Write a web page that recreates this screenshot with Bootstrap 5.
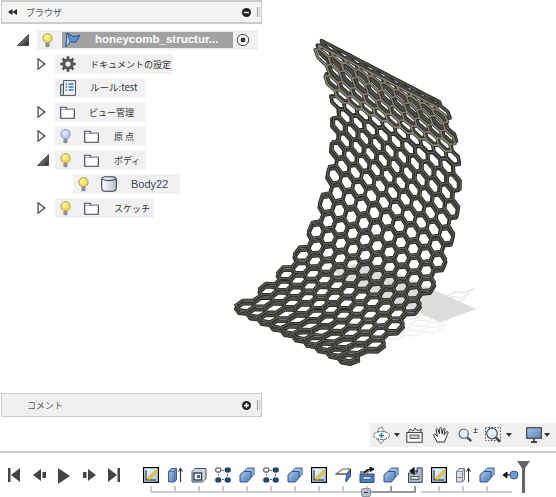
<!DOCTYPE html>
<html lang="ja">
<head>
    <meta charset="UTF-8">
    <meta name="viewport" content="width=device-width, initial-scale=1.0">
    <title>Browser</title>
    <link href="https://cdn.jsdelivr.net/npm/bootstrap@5.3.0/dist/css/bootstrap.min.css" rel="stylesheet">
    <style>
        html, body { height: 100%; overflow: hidden; }
        body { background: #fff; font-family: "Noto Sans CJK JP", "Liberation Sans", sans-serif; font-size: 9px; color: #333; line-height: 1; }
        .app-shell { height: 497px; }
        .work-area { height: 451px; }
        .model-view { position: absolute; left: 0; top: 0; width: 556px; height: 451px; pointer-events: none; }
        .side-bar { width: 261px; height: 24px; margin-left: 1px; background: #f0f0f0; border: 1px solid #ccc; position: relative; z-index: 1; }
        .side-bar.top-bar { background: #f4f4f4; border-width: 2px 1px; }
        .bar-title { color: #555; }
        .bar-arrows { width: 9px; margin: 0 9px 0 6px; }
        .comment-title { padding-left: 25px; }
        .bar-grip { width: 3px; height: 10px; border-left: 1px solid #999; border-right: 1px solid #ccc; margin: 0 1px 0 6px; }
        .tree-area { padding-top: 6px; position: relative; z-index: 1; white-space: nowrap; }
        .tree-row { height: 20px; margin-bottom: 4px; }
        .twist-closed { width: 9px; height: 12px; margin-right: 9px; }
        .twist-open { width: 12px; height: 12px; margin-right: 6px; }
        .twist-none { width: 18px; }
        .lvl0 { margin-left: 17px; }
        .lvl0 .twist-open { margin-right: 8px; }
        .lvl1 { margin-left: 37px; }
        .lvl2 { margin-left: 73px; }
        .chip { height: 20px; background: #f1f1f1; padding-left: 5px; }
        .w-root { width: 221px; }
        .w-docs { width: 118px; }
        .w-std { width: 90px; }
        .w-std2 { width: 91px; }
        .w-body { width: 107px; }
        .w-sketch { width: 99px; }
        .selected-name { width: 171px; height: 16px; background: #a2a2a2; color: #fff; font-family: "Liberation Sans", sans-serif; font-weight: 700; font-size: 11.5px; margin-left: 9px; flex-shrink: 0; }
        .selected-name svg { margin: 0 14px 0 3px; }
        .target-mark { margin-left: 3px; }
        .doc-label { margin-left: 14px; font-size: 9px; }
        .rule-label { font-size: 9.5px; }
        .folder-icon { margin-left: 13px; }
        .group-label { margin-left: 15px; }
        .origin-label { letter-spacing: 2px; }
        .cyl-icon { margin-left: 12px; }
        .body-name { font-family: "Liberation Sans", sans-serif; font-size: 11px; color: #3d4560; margin-left: 14px; }
        .comment-spacer { flex-grow: 1; }
        .view-tools { height: 24px; width: 186px; margin: 6px 0 4px auto; background: #f0f0f0; position: relative; z-index: 1; }
        .vt-orbit { margin-left: 2px; }
        .vt-drop { margin-left: 4px; }
        .vt-capture { margin-left: 6px; }
        .vt-hand { margin-left: 10px; }
        .vt-lens { margin-left: 9px; }
        .vt-plus { font-family: "Liberation Sans", sans-serif; font-size: 9px; margin: 0 0 9px 1px; width: 6px; }
        .vt-fit { margin-left: 6px; }
        .vt-drop2 { margin-left: 5px; }
        .vt-screen { margin-left: 14px; }
        .vt-drop3 { margin-left: 2px; }
        .timeline-bar { height: 46px; border-top: 2px solid #ccc; padding-left: 8px; }
        .play-strip { width: 131px; padding: 15px 19px 0 0; }
        .step-cell { width: 24px; height: 44px; padding-top: 14px; position: relative; }
        .step-cell::after { content: ""; position: absolute; left: 11px; top: 33px; width: 2px; height: 6px; background: #ccc; }
        .step-cell.dark-step::after { background: #999; }
        .track-line { position: absolute; left: 0; top: 38px; height: 2px; width: 24px; background: #ccc; }
        .dark-step .track-line { background: #999; }
        .track-start { left: 12px; width: 12px; }
        .track-end { width: 13px; }
        .track-gap { left: -6px; width: 30px; }
        .track-tail { width: 37px; }
        .track-split { background: linear-gradient(to right, #ccc 50%, #999 50%); }
        .track-handle { position: absolute; left: 6px; top: 35px; width: 10px; height: 9px; background: #b8bec8; border: 1px solid #8d95a3; border-radius: 2px; z-index: 1; }
        .track-handle::after { content: ""; position: absolute; left: 2px; top: 3px; width: 4px; height: 1px; background: #333; }
        .marker-cell { position: relative; width: 40px; height: 44px; }
        .marker-stem { position: absolute; left: 23px; top: 14px; width: 3px; height: 26px; background: #666; }
        .marker-head { position: absolute; left: 18px; top: 8px; }
        .marker-node { position: absolute; left: 4px; top: 16px; }
        .timeline-bar svg { display: block; }
        .step-cell svg { margin: 0 auto; }
    </style>
</head>
<body>
    <svg width="0" height="0" class="position-absolute">
        <defs>
            <radialGradient id="yellowGlass" cx="40%" cy="35%" r="70%"><stop offset="0" stop-color="#fff7a8"/><stop offset="1" stop-color="#f3d232"/></radialGradient>
            <radialGradient id="blueGlass" cx="40%" cy="35%" r="70%"><stop offset="0" stop-color="#e6edfb"/><stop offset="1" stop-color="#a9c0ea"/></radialGradient>
            <linearGradient id="closedArrow" x1="0" x2="1"><stop offset="0" stop-color="#fff"/><stop offset="1" stop-color="#ddd"/></linearGradient>
            <linearGradient id="openArrow" x1="0" x2="1" y1="0" y2="1"><stop offset="0" stop-color="#bbb"/><stop offset="1" stop-color="#222"/></linearGradient>
            <linearGradient id="blueBox" x1="0" x2="1" y1="0" y2="1"><stop offset="0" stop-color="#a9c4e6"/><stop offset="1" stop-color="#4d7cb5"/></linearGradient>
            <linearGradient id="cylFill" x1="0" x2="1"><stop offset="0" stop-color="#fff"/><stop offset="1" stop-color="#b9c0cc"/></linearGradient>
            <linearGradient id="sketchFill" x1="0" x2="1" y1="0" y2="1"><stop offset="0" stop-color="#fff"/><stop offset="1" stop-color="#9fc0e4"/></linearGradient>
            <linearGradient id="screenFill" x1="0" x2="1" y1="0" y2="1"><stop offset="0" stop-color="#a9c4e6"/><stop offset="1" stop-color="#5a86bd"/></linearGradient>

            <symbol id="i-closed" viewBox="0 0 9 12"><path d="M1 .8 8 6 1 11.200Z" fill="url(#closedArrow)" stroke="#444" stroke-width="1.200"/></symbol>
            <symbol id="i-open" viewBox="0 0 12 12"><path d="M11.500.5V11.500H.5Z" fill="url(#openArrow)" stroke="#333" stroke-width=".8"/></symbol>
            <symbol id="i-bulb" viewBox="0 0 11 15"><circle cx="5.500" cy="5.200" r="4.600" fill="url(#yellowGlass)" stroke="#a99b52"/><path d="M3.500 10h4v3.200l-1 1h-2l-1-1Z" fill="#8b8f98"/></symbol>
            <symbol id="i-bulb-off" viewBox="0 0 11 15"><circle cx="5.500" cy="5.200" r="4.600" fill="url(#blueGlass)" stroke="#8395b8"/><path d="M3.500 10h4v3.200l-1 1h-2l-1-1Z" fill="#8b8f98"/></symbol>
            <symbol id="i-folder" viewBox="0 0 15 13"><path d="M.7 12.300V1.200h5.400l1 2h7.200v9.100Z" fill="#fff" stroke="#3b4150" stroke-width="1.100"/><path d="M1 3.400h13" stroke="#9aa0ac" fill="none"/></symbol>
            <symbol id="i-gear" viewBox="0 0 16 16"><circle cx="8" cy="8" r="4.200" fill="none" stroke="#555" stroke-width="3.200"/><path d="M8 .2v3M8 12.800v3M.2 8h3M12.800 8h3M2.500 2.500l2.100 2.100M11.400 11.400l2.100 2.100M2.500 13.500l2.100-2.100M11.400 4.600l2.100-2.100" stroke="#555" stroke-width="2.600"/></symbol>
            <symbol id="i-rules" viewBox="0 0 16 16"><path d="M.6 4.500h3v11h-3Z" fill="#cfd3da" stroke="#4b5160"/><path d="M3.500.6h12v14.800h-12Z" fill="#eef1f6" stroke="#4b5160"/><path d="M5.500 4h1.500M5.500 7h1.500M5.500 10h1.500M8.500 4h5M8.500 7h5M8.500 10h5" stroke="#3f78bd" stroke-width="1.400"/></symbol>
            <symbol id="i-flag" viewBox="0 0 16 16"><path d="M2 .8 8 4.500l7-1-4.500 6.800-5.300-.6L1 15Z" fill="#5f8fd0" stroke="#234f8c"/><path d="M2 1 1 15l4.200-5.300Z" fill="#b9cfe9" stroke="#234f8c" stroke-width=".7"/></symbol>
            <symbol id="i-target" viewBox="0 0 14 14"><circle cx="7" cy="7" r="5.700" fill="#fff" stroke="#444"/><circle cx="7" cy="7" r="2.400" fill="#333"/></symbol>
            <symbol id="i-cyl" viewBox="0 0 16 16"><rect x=".7" y=".7" width="14.600" height="14.600" rx="3.500" fill="url(#cylFill)" stroke="#3b4150" stroke-width="1.100"/><path d="M1 3.200c3 1.800 11 1.800 14 0" fill="none" stroke="#3b4150"/></symbol>

            <symbol id="i-sketch" viewBox="0 0 16 16"><rect x=".6" y=".6" width="14.800" height="14.800" fill="url(#sketchFill)" stroke="#000" stroke-width="1.200"/><path d="M3 3v10h10" fill="none" stroke="#222" stroke-width="1.100"/><path d="M4.500 11.500 13 3l2.200 1.200L6.500 13Z" fill="#f4cc2e" stroke="#a9861e" stroke-width=".5"/></symbol>
            <symbol id="i-extrude" viewBox="0 0 16 16"><path d="M1.500 4.500 4 1.500h5.500v11L7.500 15h-6Z" fill="url(#blueBox)" stroke="#3f5f8c"/><path d="M1.500 4.500h6V15M7.500 4.500l2-3" fill="none" stroke="#3f5f8c" stroke-width=".7"/><path d="M13.500 15V2M11.500 4.500l2-3 2 3" fill="none" stroke="#333" stroke-width="1.100"/></symbol>
            <symbol id="i-shell" viewBox="0 0 16 16"><path d="M1 4.500 4 1.500h11v10l-3.500 3.500H1Z" fill="#cfd3da" stroke="#4b5160"/><rect x="3" y="6" width="7.500" height="7" fill="#fff" stroke="#24364f" stroke-width="1.300"/><rect x="6" y="8" width="3" height="3" fill="#3a6aa7"/></symbol>
            <symbol id="i-nodes" viewBox="0 0 16 16"><path d="M3.500 3.500h9M3.500 12.500h9M3.500 3.500v9M12.500 3.500v9" fill="none" stroke="#667" stroke-dasharray="2 1.500"/><rect x=".8" y="1" width="5" height="4" rx="1" fill="#fff" stroke="#333"/><rect x="10.200" y="1" width="5" height="4" rx="1" fill="#24497c" stroke="#1c3558"/><rect x=".8" y="11" width="5" height="4" rx="1" fill="#24497c" stroke="#1c3558"/><rect x="10.200" y="11" width="5" height="4" rx="1" fill="#24497c" stroke="#1c3558"/></symbol>
            <symbol id="i-combine" viewBox="0 0 16 16"><path d="M5.200 4.500 8.500 1H15v6.500l-3 3V4.500Z" fill="#9dbde4" stroke="#2f5b93"/><path d="M1 8 4.500 4.500H12v6.200L8.500 15H1Z" fill="url(#blueBox)" stroke="#2f5b93"/></symbol>
            <symbol id="i-fillet" viewBox="0 0 16 16"><path d="M.7 7 8 2h7.500l-3.500 5Z" fill="#fff" stroke="#555"/><path d="M12 7l3.500-5v7l-4.500 6q-.5-3 1-8Z" fill="#4f80bf" stroke="#24497c"/><path d="M.7 7H12" stroke="#555" fill="none"/></symbol>
            <symbol id="i-pull" viewBox="0 0 16 16"><path d="M1 7h14v8.400H1Z" fill="#4f80bf" stroke="#24497c"/><rect x="4" y="9.500" width="8" height="3" fill="#c7d5e8" stroke="#24497c" stroke-width=".7"/><path d="M1 4h10l-3 3H1Z" fill="#888"/><path d="M5 6c1-3 4-4 8-4M11 .2 15 2l-3.600 2.500Z" fill="#111" stroke="#111"/></symbol>
            <symbol id="i-press" viewBox="0 0 16 16"><path d="M10 .8h5.200V15.400H1.500V6H10Z" fill="#b5b8bd" stroke="#24497c"/><rect x="4" y="9.500" width="8" height="3" fill="#d9dce0" stroke="#333" stroke-width=".7"/><path d="M11 4H6M7 1 3 4l4 3Z" fill="#111" stroke="#111" stroke-width="1.200"/></symbol>
            <symbol id="i-extrude-grey" viewBox="0 0 16 16"><path d="M1.500 4.500 4 1.500h5.500v11L7.500 15h-6Z" fill="#d9dfe6" stroke="#6d7480"/><path d="M1.500 4.500h6V15M7.500 4.500l2-3" fill="none" stroke="#6d7480" stroke-width=".7"/><path d="M1.500 10.500h6" stroke="#888"/><path d="M13.500 15V2M11.500 4.500l2-3 2 3" fill="none" stroke="#333" stroke-width="1.100"/></symbol>

            <symbol id="i-orbit" viewBox="0 0 18 18"><ellipse cx="9" cy="9" rx="3.500" ry="8" fill="none" stroke="#555" stroke-dasharray="3 1"/><ellipse cx="9.500" cy="9.500" rx="8" ry="4" fill="#fff" stroke="#555" stroke-dasharray="3 1"/><path d="M7 9.500h5M9.500 7v5" stroke="#2a7ac0" stroke-width="1.500"/></symbol>
            <symbol id="i-capture" viewBox="0 0 17 16"><path d="M.8 5.500h15.400v9.800H.8Z" fill="#fff" stroke="#444" stroke-width="1.100"/><rect x="4" y="8" width="9" height="3.500" fill="#c8cdd4" stroke="#444" stroke-width=".8"/><path d="M2.500 5.500 4 2l3 2 2-3 2 2.500 5-1-2 3" fill="none" stroke="#444"/></symbol>
            <symbol id="i-hand" viewBox="0 0 16 16"><path d="M4 15 .8 8.500c-.5-1.500 1-2 2-.8L4.500 9.500 3 3c-.2-1.500 1.500-1.700 2-.3L6.500 7 6.700 1.500c.1-1.400 1.800-1.300 1.900 0L9 7l1.300-4.800c.4-1.300 2-1 1.700.5L11 8l2.300-3c.9-1.100 2.300-.3 1.600 1L11.500 15Z" fill="#fff" stroke="#333"/></symbol>
            <symbol id="i-lens" viewBox="0 0 16 16"><circle cx="6.500" cy="6.500" r="5.300" fill="#e4eef8" stroke="#555" stroke-width="1.200"/><path d="M10.500 10.500 15 15" stroke="#444" stroke-width="2.600"/></symbol>
            <symbol id="i-lens-fit" viewBox="0 0 16 16"><rect x=".5" y=".5" width="15" height="13" fill="none" stroke="#555" stroke-dasharray="1.500 1.500"/><circle cx="7" cy="6.500" r="5.300" fill="#e4eef8" stroke="#555" stroke-width="1.200"/><path d="M11 10.500 15 15" stroke="#444" stroke-width="2.600"/></symbol>
            <symbol id="i-screen" viewBox="0 0 16 16"><rect x=".7" y=".7" width="14.600" height="10.600" fill="url(#screenFill)" stroke="#444" stroke-width="1.200"/><path d="M5 15h6M8 11.500V15" stroke="#444" stroke-width="1.800"/></symbol>
            <symbol id="i-drop" viewBox="0 0 6 4"><path d="M0 0h6L3 4Z" fill="#333"/></symbol>
        </defs>
    </svg>

    <div class="app-shell d-flex flex-column">
        <div class="work-area d-flex flex-column position-relative">
            <svg id="modelView" class="model-view" viewBox="0 0 556 451"></svg>

            <div class="side-bar top-bar d-flex align-items-center">
                <svg class="bar-arrows" height="6" viewBox="0 0 9 6"><path d="M4.500 0v6L0 3ZM9 0v6L4.500 3Z" fill="#222"/></svg>
                <span class="bar-title flex-grow-1">ブラウザ</span>
                <svg width="9" height="9" viewBox="0 0 9 9"><circle cx="4.500" cy="4.500" r="4.500" fill="#222"/><path d="M2 4.500h5" stroke="#fff" stroke-width="1.400"/></svg>
                <span class="bar-grip"></span>
            </div>

            <div class="tree-area">
                <div class="tree-row d-flex align-items-center lvl0">
                    <svg class="twist-open"><use href="#i-open"/></svg>
                    <div class="chip w-root d-flex align-items-center">
                        <svg width="11" height="15"><use href="#i-bulb"/></svg>
                        <div class="selected-name d-flex align-items-center">
                            <svg width="16" height="16"><use href="#i-flag"/></svg>
                            <span>honeycomb_structur...</span>
                        </div>
                        <svg class="target-mark" width="14" height="14"><use href="#i-target"/></svg>
                    </div>
                </div>
                <div class="tree-row d-flex align-items-center lvl1">
                    <svg class="twist-closed"><use href="#i-closed"/></svg>
                    <div class="chip w-docs d-flex align-items-center">
                        <svg width="16" height="16"><use href="#i-gear"/></svg>
                        <span class="doc-label">ドキュメントの設定</span>
                    </div>
                </div>
                <div class="tree-row d-flex align-items-center lvl1">
                    <span class="twist-none"></span>
                    <div class="chip w-std d-flex align-items-center">
                        <svg width="16" height="16"><use href="#i-rules"/></svg>
                        <span class="doc-label rule-label">ルール:test</span>
                    </div>
                </div>
                <div class="tree-row d-flex align-items-center lvl1">
                    <svg class="twist-closed"><use href="#i-closed"/></svg>
                    <div class="chip w-std d-flex align-items-center">
                        <svg width="15" height="13"><use href="#i-folder"/></svg>
                        <span class="doc-label">ビュー管理</span>
                    </div>
                </div>
                <div class="tree-row d-flex align-items-center lvl1">
                    <svg class="twist-closed"><use href="#i-closed"/></svg>
                    <div class="chip w-std2 d-flex align-items-center">
                        <svg width="11" height="15"><use href="#i-bulb-off"/></svg>
                        <svg class="folder-icon" width="15" height="13"><use href="#i-folder"/></svg>
                        <span class="group-label origin-label">原点</span>
                    </div>
                </div>
                <div class="tree-row d-flex align-items-center lvl1">
                    <svg class="twist-open"><use href="#i-open"/></svg>
                    <div class="chip w-std2 d-flex align-items-center">
                        <svg width="11" height="15"><use href="#i-bulb"/></svg>
                        <svg class="folder-icon" width="15" height="13"><use href="#i-folder"/></svg>
                        <span class="group-label">ボディ</span>
                    </div>
                </div>
                <div class="tree-row d-flex align-items-center lvl2">
                    <div class="chip w-body d-flex align-items-center">
                        <svg width="11" height="15"><use href="#i-bulb"/></svg>
                        <svg class="cyl-icon" width="16" height="16"><use href="#i-cyl"/></svg>
                        <span class="body-name">Body22</span>
                    </div>
                </div>
                <div class="tree-row d-flex align-items-center lvl1">
                    <svg class="twist-closed"><use href="#i-closed"/></svg>
                    <div class="chip w-sketch d-flex align-items-center">
                        <svg width="11" height="15"><use href="#i-bulb"/></svg>
                        <svg class="folder-icon" width="15" height="13"><use href="#i-folder"/></svg>
                        <span class="group-label">スケッチ</span>
                    </div>
                </div>
            </div>

            <div class="comment-spacer"></div>

            <div class="side-bar d-flex align-items-center">
                <span class="bar-title comment-title flex-grow-1">コメント</span>
                <svg width="9" height="9" viewBox="0 0 9 9"><circle cx="4.500" cy="4.500" r="4.500" fill="#222"/><path d="M2 4.500h5M4.500 2v5" stroke="#fff" stroke-width="1.400"/></svg>
                <span class="bar-grip"></span>
            </div>

            <div class="view-tools d-flex align-items-center">
                <svg class="vt-orbit" width="18" height="18"><use href="#i-orbit"/></svg>
                <svg class="vt-drop" width="6" height="4"><use href="#i-drop"/></svg>
                <svg class="vt-capture" width="17" height="16"><use href="#i-capture"/></svg>
                <svg class="vt-hand" width="16" height="16"><use href="#i-hand"/></svg>
                <svg class="vt-lens" width="14" height="14"><use href="#i-lens"/></svg>
                <span class="vt-plus">±</span>
                <svg class="vt-fit" width="16" height="16"><use href="#i-lens-fit"/></svg>
                <svg class="vt-drop2" width="6" height="4"><use href="#i-drop"/></svg>
                <svg class="vt-screen" width="16" height="16"><use href="#i-screen"/></svg>
                <svg class="vt-drop3" width="6" height="4"><use href="#i-drop"/></svg>
            </div>
        </div>

        <div class="timeline-bar d-flex">
            <div class="play-strip d-flex justify-content-between">
                <svg width="12" height="14" viewBox="0 0 12 14"><path d="M0 0h2.500v14H0ZM12 0v14L3 7Z" fill="#444"/></svg>
                <svg width="13" height="14" viewBox="0 0 13 14"><path d="M8 1v12L0 7ZM9.500 4H13v6H9.500Z" fill="#444"/></svg>
                <svg width="12" height="16" viewBox="0 0 12 16"><path d="M0 0l12 8L0 16Z" fill="#444"/></svg>
                <svg width="13" height="14" viewBox="0 0 13 14"><path d="M5 1v12l8-6ZM0 4h3.500v6H0Z" fill="#444"/></svg>
                <svg width="12" height="14" viewBox="0 0 12 14"><path d="M12 0H9.500v14H12ZM0 0v14l9-7Z" fill="#444"/></svg>
            </div>
            <div id="steps" class="d-flex"></div>
            <div class="marker-cell">
                <svg class="marker-node" width="16" height="12" viewBox="0 0 16 12"><circle cx="11" cy="6" r="4" fill="#6f9bd6" stroke="#2f5b93"/><path d="M7 6H3M4 3 0 6l4 3Z" fill="#111" stroke="#111"/></svg>
                <span class="marker-stem"></span>
                <svg class="marker-head" width="13" height="8" viewBox="0 0 13 8"><path d="M0 0h13L7.500 8h-2Z" fill="#666"/></svg>
            </div>
        </div>
    </div>

    <script src="https://cdn.jsdelivr.net/npm/bootstrap@5.3.0/dist/js/bootstrap.bundle.min.js"></script>
    <script>
        // timeline steps, one per feature
        const stepIcons = ['sketch', 'extrude', 'shell', 'nodes', 'combine', 'nodes', 'combine', 'sketch', 'fillet', 'pull', 'combine', 'press', 'sketch', 'extrude-grey', 'combine'];
        const trackClass = { 0: 'track-start', 9: 'track-split', 11: 'track-end', 12: 'track-gap', 14: 'track-tail' };
        const stepsEl = document.getElementById('steps');
        stepIcons.forEach((name, i) => {
            const dark = i === 10 || i === 11;
            stepsEl.insertAdjacentHTML('beforeend',
                `<div class="step-cell${dark ? ' dark-step' : ''}">` +
                `<svg width="16" height="16"><use href="#i-${name}"/></svg>` +
                `<span class="track-line ${trackClass[i] || ''}"></span>` +
                (i === 9 ? '<span class="track-handle"></span>' : '') +
                `</div>`);
        });

        // honeycomb surface: two edge curves, hexagon walls blended between them
        const leftEdge = [[233,307],[260,288],[282,268],[302,243],[317,210],[328,173],[333,140],[333,108],[326,80],[312,42]];
        const rightEdge = [[347,362],[378,348],[402,325],[423,300],[440,272],[452,240],[459,205],[460,170],[454,140],[443,110]];

        function curve(points, t) {
            const f = Math.min(Math.max(t, 0), 1) * (points.length - 1);
            const i = Math.min(Math.floor(f), points.length - 2);
            const s = f - i;
            const p0 = points[Math.max(i - 1, 0)], p1 = points[i], p2 = points[i + 1], p3 = points[Math.min(i + 2, points.length - 1)];
            return [0, 1].map(k => 0.5 * (2 * p1[k] + (p2[k] - p0[k]) * s + (2 * p0[k] - 5 * p1[k] + 4 * p2[k] - p3[k]) * s * s + (3 * p1[k] - p0[k] - 3 * p2[k] + p3[k]) * s * s * s));
        }

        // rows bunch up a little toward the top, where the sheet leans away
        function warp(t) {
            return 1 - Math.pow(1 - Math.min(t, 1), 1.1);
        }

        function surface(u, t) {
            const v = warp(t);
            const a = curve(leftEdge, v), b = curve(rightEdge, v);
            return [a[0] + (b[0] - a[0]) * u, a[1] + (b[1] - a[1]) * u];
        }

        // side wall direction changes as the sheet bends away from the camera
        function extrudeAt(v) {
            const stops = [[0, 0, 3.5], [0.5, 0, 3.5], [0.72, -2, 1.5], [0.86, 1, -2], [1, 3, -5]];
            for (let i = 1; i < stops.length; i++) {
                if (v <= stops[i][0]) {
                    const t = (v - stops[i - 1][0]) / (stops[i][0] - stops[i - 1][0]);
                    return [stops[i - 1][1] + (stops[i][1] - stops[i - 1][1]) * t, stops[i - 1][2] + (stops[i][2] - stops[i - 1][2]) * t];
                }
            }
            return [3, -5];
        }

        const cols = 10, rows = 24;
        const du = 1 / cols, dv = 1 / rows;
        const corners = [[0, -2/3], [0.5, -1/3], [0.5, 1/3], [0, 2/3], [-0.5, 1/3], [-0.5, -1/3]];
        const lower = [], upper = [];
        for (let r = 0; r < rows; r++) {
            for (let c = 0; c < cols; c++) {
                const cu = (c + (r % 2 ? 1 : 0.5)) * du;
                if (cu > 0.99) continue;
                const cv = (r + 0.7) * dv;
                const pts = corners.map(k => surface(cu + k[0] * du, cv + k[1] * dv));
                const e = extrudeAt(warp(cv));
                const low = pts.map(p => `${(p[0] + e[0]).toFixed(1)} ${(p[1] + e[1]).toFixed(1)}`);
                const up = pts.map(p => `${p[0].toFixed(1)} ${p[1].toFixed(1)}`);
                lower.push(`M${low.join('L')}Z`);
                upper.push({ d: `M${up.join('L')}Z`, tan: warp(cv) > 0.82 });
            }
        }

        // shadow on the ground, with the fading ripples below it
        let ripple = '';
        for (let n = 0; n < 9; n++) {
            let d = '';
            const x0 = 388 + n * 4, y0 = 338 - n * 5;
            for (let k = 0; k < 7; k++) {
                d += `${k ? 'L' : 'M'}${x0 + k * 9} ${y0 - k * 1.6 + (k % 2 ? 3 : 0)}`;
            }
            ripple += `<path d="${d}" fill="none" stroke="#ddd" stroke-width="1.200" opacity="${0.5 + n * 0.05}"/>`;
        }
        const upperPlain = upper.filter(h => !h.tan).map(h => h.d).join('');
        const upperTan = upper.filter(h => h.tan).map(h => h.d).join('');
        document.getElementById('modelView').innerHTML =
            `<path d="M330 268 372 262 476 309 440 322 404 306 360 292Z" fill="#dcdcdc"/>` + ripple +
            `<g fill="none" stroke-linejoin="round">` +
            `<path d="${lower.join('')}" stroke="#252525" stroke-width="3.600"/>` +
            `<path d="${lower.join('')}" stroke="#4e4e48" stroke-width="2"/>` +
            `<path d="${upperPlain}${upperTan}" stroke="#222" stroke-width="3"/>` +
            `<path d="${upperPlain}" stroke="#5c5c54" stroke-width="1.500"/>` +
            `<path d="${upperTan}" stroke="#85816f" stroke-width="1.800"/>` +
            `</g>`;
    </script>
</body>
</html>
